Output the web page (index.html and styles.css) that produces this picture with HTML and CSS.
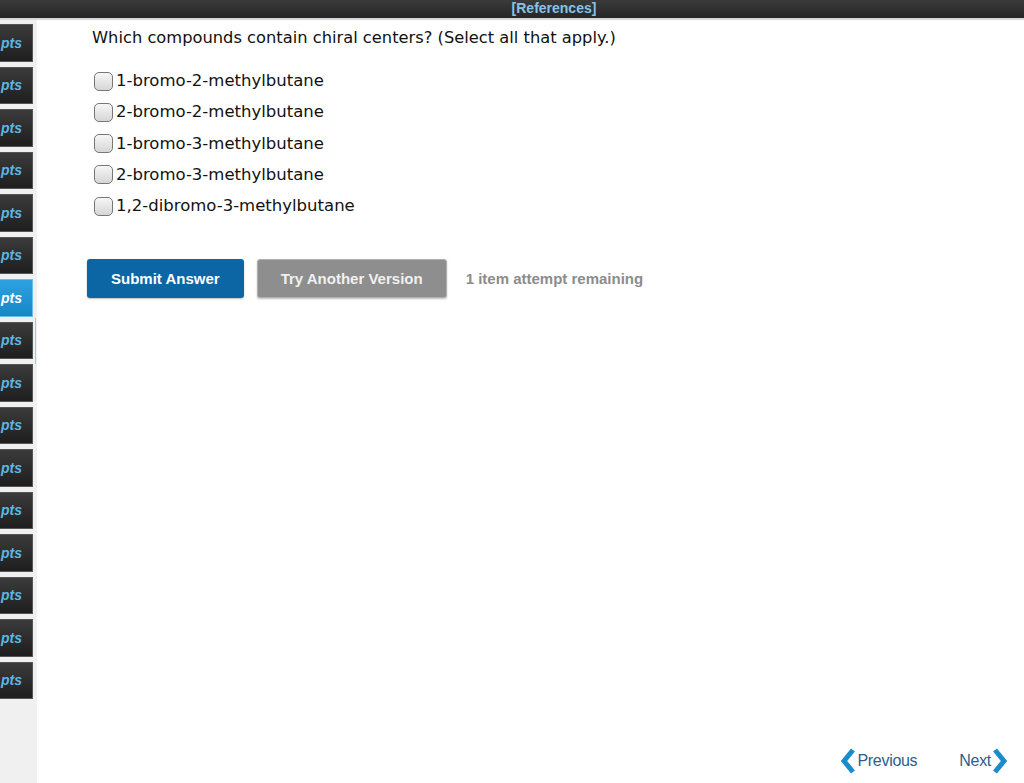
FILE: index.html
```html
<!DOCTYPE html>
<html lang="en">

<head>
	<meta charset="UTF-8">
	<link rel="stylesheet" href="styles.css">
	<title>Question</title>
</head>

<body>
	<div class="topbar">
		<a class="refs">[References]</a>
	</div>
	<div class="page">
		<div class="sidebar">
			<div class="tile">pts</div>
			<div class="tile">pts</div>
			<div class="tile">pts</div>
			<div class="tile">pts</div>
			<div class="tile">pts</div>
			<div class="tile">pts</div>
			<div class="tile active">pts</div>
			<div class="tile next">pts</div>
			<div class="tile">pts</div>
			<div class="tile">pts</div>
			<div class="tile">pts</div>
			<div class="tile">pts</div>
			<div class="tile">pts</div>
			<div class="tile">pts</div>
			<div class="tile">pts</div>
			<div class="tile">pts</div>
		</div>
		<div class="main">
			<p class="question">Which compounds contain chiral centers? (Select all that apply.)</p>
			<div class="options">
				<label class="option"><span class="box"></span>1-bromo-2-methylbutane</label>
				<label class="option"><span class="box"></span>2-bromo-2-methylbutane</label>
				<label class="option"><span class="box"></span>1-bromo-3-methylbutane</label>
				<label class="option"><span class="box"></span>2-bromo-3-methylbutane</label>
				<label class="option"><span class="box"></span>1,2-dibromo-3-methylbutane</label>
			</div>
			<div class="actions">
				<button class="btn submit">Submit Answer</button>
				<button class="btn another">Try Another Version</button>
				<span class="remaining">1 item attempt remaining</span>
			</div>
			<div class="nav">
				<a class="nav-link">
					<svg width="16" height="26" viewBox="0 0 16 26"><path d="M13 2 L4 13 L13 24" fill="none" stroke="#1b8ccb" stroke-width="5" stroke-linejoin="miter"/></svg>
					Previous
				</a>
				<a class="nav-link">
					Next
					<svg width="16" height="26" viewBox="0 0 16 26"><path d="M3 2 L12 13 L3 24" fill="none" stroke="#1b8ccb" stroke-width="5" stroke-linejoin="miter"/></svg>
				</a>
			</div>
		</div>
	</div>
</body>

</html>
```

FILE: styles.css
```css
body {
	margin: 0;
	background-color: #ffffff;
	font-family: "DejaVu Sans", Verdana, sans-serif;
	height: 783px;
	overflow: hidden;
}

.topbar {
	height: 18px;
	line-height: 16px;
	background: linear-gradient(#3a3a3a, #262626);
	border-bottom: 2px solid #d8d8d8;
	text-align: center;
	padding-left: 84px;
}

.refs {
	font-family: "Liberation Sans", Arial, sans-serif;
	font-weight: bold;
	font-size: 14px;
	color: #86c3e6;
}

.page {
	display: flex;
	height: 763px;
}

.sidebar {
	width: 37px;
	background-color: #f0f0f0;
	padding-top: 4px;
	display: flex;
	flex-direction: column;
	gap: 5px;
	flex-shrink: 0;
}

.tile {
	width: 33px;
	height: 37.5px;
	box-sizing: border-box;
	background: linear-gradient(#3b3b3b, #1e1e1e);
	border: 1px solid #555;
	border-left: none;
	color: #5cb6e4;
	font-family: "Liberation Sans", Arial, sans-serif;
	font-weight: bold;
	font-style: italic;
	font-size: 14px;
	display: flex;
	align-items: center;
	justify-content: flex-end;
	padding-right: 10px;
	white-space: nowrap;
}

.tile.active {
	background: linear-gradient(#2ea2e0, #1587c8);
	border-color: #67bde9;
	color: #ffffff;
}

.tile.next {
	position: relative;
}

.tile.next::after {
	content: "";
	position: absolute;
	left: 35px;
	top: -5px;
	width: 1px;
	height: 46px;
	background-color: #a9c6ee;
}

.main {
	flex: 1;
	position: relative;
	padding-left: 55px;
}

.question {
	margin: 8px 0 0 0;
	font-size: 16.3px;
	line-height: 20px;
	color: #111;
}

.options {
	display: flex;
	flex-direction: column;
	margin-top: 23px;
	margin-left: 2px;
	gap: 11.3px;
}

.option {
	display: flex;
	align-items: center;
	gap: 3px;
	font-size: 16.5px;
	line-height: 20px;
	color: #111;
}

.box {
	width: 17px;
	height: 17px;
	border: 1px solid #777;
	border-radius: 5px;
	background: linear-gradient(#f6f6f6, #d6d6d6);
}

.actions {
	display: flex;
	align-items: center;
	margin-top: 43px;
	margin-left: -5px;
	gap: 13px;
}

.btn {
	height: 39px;
	border: none;
	border-radius: 3px;
	font-family: "Liberation Sans", Arial, sans-serif;
	font-weight: bold;
	font-size: 15px;
	padding: 0 24px;
	box-shadow: 0 1px 2px rgba(0, 0, 0, 0.25);
}

.submit {
	background-color: #0b66a3;
	color: #ffffff;
}

.another {
	background-color: #8e8e8e;
	color: #f0f0f0;
	padding: 0 23px;
	border: 1px solid #b0b0b0;
}

.remaining {
	margin-left: 6px;
	font-family: "Liberation Sans", Arial, sans-serif;
	font-weight: bold;
	font-size: 15px;
	color: #8c8c8c;
}

.nav {
	position: absolute;
	right: 16px;
	bottom: 9px;
	display: flex;
	gap: 42px;
}

.nav-link {
	display: flex;
	align-items: center;
	gap: 1px;
	font-family: "Liberation Sans", Arial, sans-serif;
	font-size: 16px;
	letter-spacing: -0.3px;
	color: #2b5e8c;
}
```
